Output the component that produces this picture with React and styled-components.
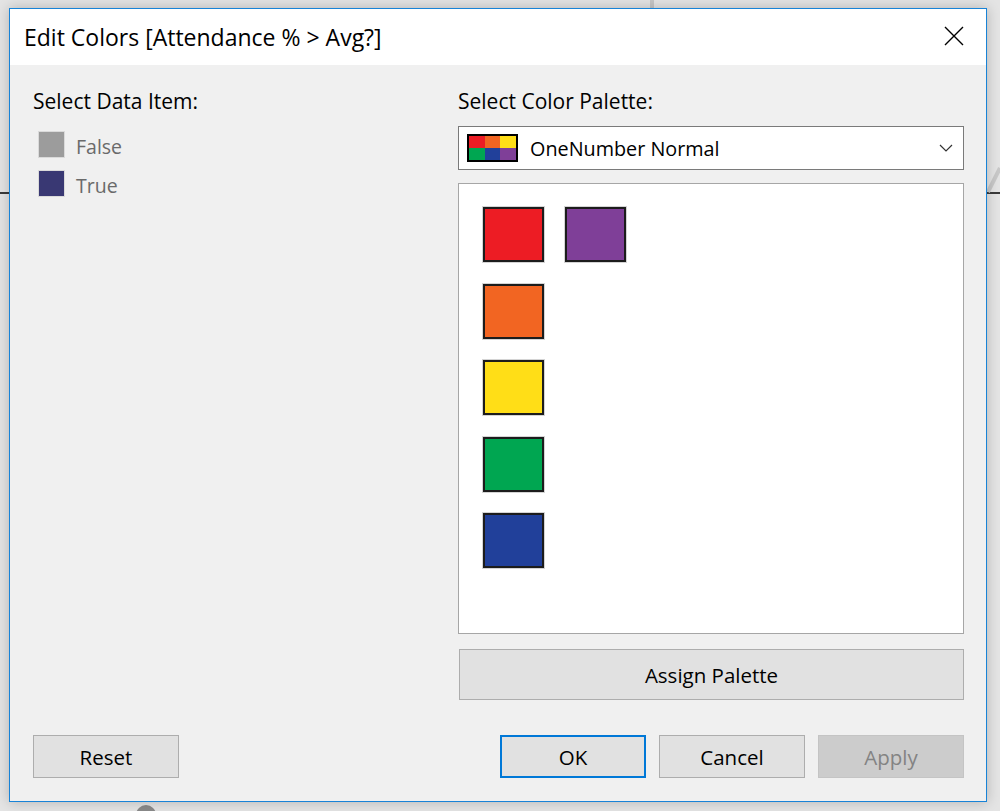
import React from "react";
import styled, { createGlobalStyle } from "styled-components";

const GlobalStyle = createGlobalStyle`
  html, body { margin: 0; padding: 0; }
  body {
    width: 1000px;
    height: 811px;
    overflow: hidden;
    background: #e4e4e4;
    font-family: "Open Sans", "Noto Sans", "Liberation Sans", sans-serif;
  }
`;

const Page = styled.div`
  position: relative;
  width: 1000px;
  height: 811px;
  padding: 8px 0 0 9px;
  box-sizing: border-box;
  overflow: hidden;
`;

const Backdrop = styled.svg`
  position: absolute;
  left: 0;
  top: 0;
  width: 1000px;
  height: 811px;
`;

const Dialog = styled.div`
  position: relative;
  width: 978px;
  height: 794px;
  box-sizing: border-box;
  border: 1px solid #1883d7;
  background: #f0f0f0;
  box-shadow: 0 0 12px rgba(0, 0, 0, 0.22);
  display: flex;
  flex-direction: column;
`;

const TitleBar = styled.div`
  height: 56px;
  flex: none;
  background: #ffffff;
  display: flex;
  align-items: center;
  justify-content: space-between;
  padding: 0 22px 0 14px;
`;

const Title = styled.div`
  font-size: 23px;
  color: #000;
  margin-top: -1px;
`;

const CloseButton = styled.div`
  width: 22px;
  height: 22px;
  display: flex;
  align-items: center;
  justify-content: center;
  margin-top: -2px;
  margin-right: -1px;
`;

const Body = styled.div`
  flex: 1;
  display: flex;
  flex-direction: column;
  padding: 21px 22px 0 23px;
`;

const Columns = styled.div`
  display: grid;
  grid-template-columns: 425px 506px;
`;

const Column = styled.div`
  display: flex;
  flex-direction: column;
`;

const Label = styled.div`
  font-size: 21px;
  line-height: 28px;
  height: 28px;
  color: #000;
  padding-top: 1px;
  box-sizing: border-box;
`;

const ItemList = styled.div`
  display: flex;
  flex-direction: column;
  gap: 12px;
  margin-top: 17px;
  padding-left: 5px;
`;

const Item = styled.div`
  display: flex;
  align-items: center;
  gap: 11px;
  height: 27px;
`;

const ItemSwatch = styled.div`
  width: 27px;
  height: 27px;
  box-sizing: border-box;
  background: ${(p) => p.$color};
  border: 1px solid #dadada;
`;

const ItemText = styled.span`
  font-size: 19.5px;
  color: #6a6a6a;
  padding-top: 4px;
`;

const Dropdown = styled.div`
  margin-top: 12px;
  height: 44px;
  box-sizing: border-box;
  border: 1px solid #7a7a7a;
  background: #fff;
  display: flex;
  align-items: center;
  padding: 0 10px 0 8px;
`;

const PaletteIcon = styled.div`
  width: 51px;
  height: 28px;
  box-sizing: border-box;
  border: 2px solid #000;
  display: grid;
  grid-template-columns: repeat(3, 1fr);
  grid-template-rows: repeat(2, 1fr);
  flex: none;
`;

const PaletteCell = styled.div`
  background: ${(p) => p.$color};
`;

const DropdownText = styled.span`
  font-size: 19.8px;
  color: #000;
  margin-left: 12px;
  padding-top: 1px;
  flex: 1;
`;

const Panel = styled.div`
  margin-top: 13px;
  height: 451px;
  box-sizing: border-box;
  border: 1px solid #a6a6a6;
  background: #fff;
  padding: 22px 0 0 23px;
`;

const SwatchGrid = styled.div`
  display: grid;
  grid-auto-flow: column;
  grid-template-rows: repeat(5, 57px);
  grid-auto-columns: 63px;
  row-gap: 19.6px;
  column-gap: 19px;
`;

const Swatch = styled.div`
  margin: 1px;
  box-sizing: border-box;
  background: ${(p) => p.$color};
  border: 2px solid #1c1c1c;
  box-shadow: 0 0 0 1px #d4d4d4;
`;

const Button = styled.div`
  height: ${(p) => p.$height || 43}px;
  box-sizing: border-box;
  border: 1px solid ${(p) => (p.$primary ? "#0078d7" : p.$disabled ? "#c4c4c4" : "#adadad")};
  background: ${(p) => (p.$disabled ? "#cccccc" : "#e1e1e1")};
  color: ${(p) => (p.$disabled ? "#838383" : "#000")};
  font-size: 20.5px;
  display: flex;
  align-items: center;
  justify-content: center;
  width: ${(p) => (p.$width ? `${p.$width}px` : "auto")};
  ${(p) => p.$primary && "box-shadow: inset 0 0 0 1px #0078d7;"}
`;

const AssignButton = styled(Button)`
  margin-top: 15px;
  margin-left: 1px;
`;

const Footer = styled.div`
  margin-top: 35px;
  display: flex;
  align-items: center;
`;

const FooterRight = styled.div`
  margin-left: auto;
  display: flex;
  gap: 13px;
`;

const palette = ["#ed1c24", "#f26522", "#ffde17", "#00a651", "#21409a", "#7f3f98"];

export default function App() {
  return (
    <>
      <GlobalStyle />
      <Page>
        <Backdrop viewBox="0 0 1000 811">
          <line x1="652" y1="0" x2="652" y2="9" stroke="#c6c6c6" strokeWidth="4" />
          <line x1="0" y1="193" x2="10" y2="193" stroke="#3a3a3a" strokeWidth="2" />
          <line x1="986" y1="193" x2="1000" y2="193" stroke="#3a3a3a" strokeWidth="2" />
          <line x1="988" y1="192" x2="1000" y2="168" stroke="#c8c8c8" strokeWidth="4" />
          <circle cx="146" cy="815" r="10" fill="#8a8a8a" />
        </Backdrop>
        <Dialog>
          <TitleBar>
            <Title>Edit Colors [Attendance % &gt; Avg?]</Title>
            <CloseButton>
              <svg width="20" height="20" viewBox="0 0 20 20">
                <path d="M1 1 L19 19 M19 1 L1 19" stroke="#000" strokeWidth="1.4" fill="none" />
              </svg>
            </CloseButton>
          </TitleBar>
          <Body>
            <Columns>
              <Column>
                <Label>Select Data Item:</Label>
                <ItemList>
                  <Item>
                    <ItemSwatch $color="#9c9c9c" />
                    <ItemText>False</ItemText>
                  </Item>
                  <Item>
                    <ItemSwatch $color="#393873" />
                    <ItemText>True</ItemText>
                  </Item>
                </ItemList>
              </Column>
              <Column>
                <Label>Select Color Palette:</Label>
                <Dropdown>
                  <PaletteIcon>
                    <PaletteCell $color="#ed1c24" />
                    <PaletteCell $color="#f26522" />
                    <PaletteCell $color="#ffde17" />
                    <PaletteCell $color="#00a651" />
                    <PaletteCell $color="#21409a" />
                    <PaletteCell $color="#7f3f98" />
                  </PaletteIcon>
                  <DropdownText>OneNumber Normal</DropdownText>
                  <svg width="14" height="8" viewBox="0 0 14 8">
                    <path d="M1 1 L7 7 L13 1" stroke="#333" strokeWidth="1.2" fill="none" />
                  </svg>
                </Dropdown>
                <Panel>
                  <SwatchGrid>
                    {palette.map((c) => (
                      <Swatch key={c} $color={c} />
                    ))}
                  </SwatchGrid>
                </Panel>
                <AssignButton $height={51}>Assign Palette</AssignButton>
              </Column>
            </Columns>
            <Footer>
              <Button $width={146}>Reset</Button>
              <FooterRight>
                <Button $width={146} $primary>OK</Button>
                <Button $width={146}>Cancel</Button>
                <Button $width={146} $disabled>Apply</Button>
              </FooterRight>
            </Footer>
          </Body>
        </Dialog>
      </Page>
    </>
  );
}
